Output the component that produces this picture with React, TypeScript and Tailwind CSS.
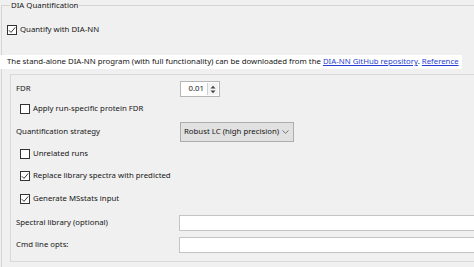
import React from "react";

function Box({ checked }: { checked?: boolean }) {
  return (
    <span className="w-[10px] h-[10px] border border-[#333333] bg-white flex items-center justify-center shrink-0">
      {checked && (
        <svg width="8" height="8" viewBox="0 0 8 8">
          <path d="M0.8 4.2 L3 6.4 L7.2 1.4" fill="none" stroke="#222222" strokeWidth="0.9" />
        </svg>
      )}
    </span>
  );
}

function Check({ checked, label, className }: { checked?: boolean; label: string; className?: string }) {
  return (
    <div className={"flex items-center gap-[3px] h-[12px] " + (className ?? "")}>
      <Box checked={checked} />
      <span>{label}</span>
    </div>
  );
}

export default function App() {
  return (
    <div className="w-[474px] h-[267px] overflow-hidden bg-[#f0f0f0] font-['Noto_Sans',sans-serif] text-[7.8px] text-[#161616]">
      <fieldset className="ml-[1px] w-[500px] h-[290px] border border-[#d5d5d5] pl-[5px]">
        <legend className="ml-[3px] px-[1px] leading-[11px]">DIA Quantification</legend>
        <Check checked label="Quantify with DIA-NN" className="mt-[13px]" />
        <div className="mt-[19px] -ml-[7px] w-[462px] h-[14px] bg-white pl-[7px] flex items-center whitespace-nowrap">
          <span>
            The stand-alone DIA-NN program (with full functionality) can be downloaded from the{" "}
            <span className="text-[#2a3fcf] underline">DIA-NN GitHub repository</span>.{" "}
            <span className="text-[#2a3fcf] underline">Reference</span>
          </span>
        </div>
        <div className="mt-[5px] ml-[3px] w-[480px] h-[188px] border border-[#d9d9d9] pl-[5px]">
          <div className="mt-[6px] h-[16px] flex items-center">
            <span className="w-[164px]">FDR</span>
            <div className="w-[40px] h-[16px] bg-white border border-[#b5b5b5] flex items-center">
              <span className="flex-1 text-right pr-[3px]">0.01</span>
              <div className="w-[11px] h-[12px] flex flex-col items-center justify-center gap-[1px] bg-[#f4f4f4] border-l border-[#d0d0d0] mr-[1px]">
                <svg width="6" height="4" viewBox="0 0 6 4">
                  <path d="M0.5 3.5 L3 0.8 L5.5 3.5 Z" fill="#444444" />
                </svg>
                <svg width="6" height="4" viewBox="0 0 6 4">
                  <path d="M0.5 0.5 L3 3.2 L5.5 0.5 Z" fill="#444444" />
                </svg>
              </div>
            </div>
          </div>
          <Check label="Apply run-specific protein FDR" className="mt-[6px] pl-[4px]" />
          <div className="mt-[7px] h-[20px] flex items-center">
            <span className="w-[164px]">Quantification strategy</span>
            <div className="w-[114px] h-[20px] bg-[#e1e1e1] border border-[#adadad] flex items-center pl-[3px] pr-[4px]">
              <span className="flex-1">Robust LC (high precision)</span>
              <svg width="7" height="4" viewBox="0 0 7 4">
                <path d="M0.5 0.5 L3.5 3.3 L6.5 0.5" fill="none" stroke="#555555" strokeWidth="0.8" />
              </svg>
            </div>
          </div>
          <Check label="Unrelated runs" className="mt-[6px] pl-[4px]" />
          <Check checked label="Replace library spectra with predicted" className="mt-[10px] pl-[4px]" />
          <Check checked label="Generate MSstats input" className="mt-[11px] pl-[4px]" />
          <div className="mt-[10px] h-[16px] flex items-center">
            <span className="w-[163px]">Spectral library (optional)</span>
            <div className="flex-1 h-[16px] bg-white border border-[#c4c4c4]" />
          </div>
          <div className="mt-[6px] h-[16px] flex items-center">
            <span className="w-[163px]">Cmd line opts:</span>
            <div className="flex-1 h-[16px] bg-white border border-[#c4c4c4]" />
          </div>
        </div>
      </fieldset>
    </div>
  );
}
